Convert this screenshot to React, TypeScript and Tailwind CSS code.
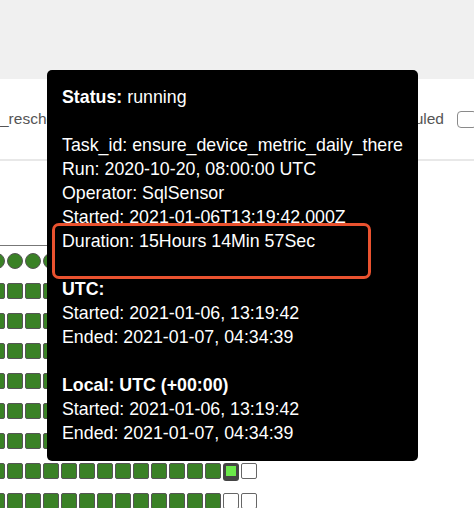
import React from 'react';

type CellState = 'success' | 'running' | 'none';

const COLS = 15;

function makeRow(green: number, extra: CellState[] = []): CellState[] {
  const row: CellState[] = Array.from({ length: green }, () => 'success' as CellState);
  return [...row, ...extra].concat(Array(Math.max(0, COLS - green - extra.length)).fill('none'));
}

const rows: CellState[][] = [
  makeRow(15),
  makeRow(15),
  makeRow(15),
  makeRow(15),
  makeRow(15),
  makeRow(15),
  makeRow(13, ['running', 'none']),
  makeRow(13, ['none', 'none']),
];

function Cell({ state }: { state: CellState }) {
  if (state === 'running') {
    return (
      <div className="w-[16px] h-[16px] rounded-[3px] bg-[#444] flex items-center justify-center shadow-[0_2px_0_#444]">
        <div className="w-[10px] h-[10px] bg-[#6be84a]" />
      </div>
    );
  }
  if (state === 'none') {
    return <div className="w-[16px] h-[16px] rounded-[2px] border border-[#666] bg-white" />;
  }
  return <div className="w-[16px] h-[16px] rounded-[2px] border border-[#555] bg-[#3a8126]" />;
}

const tooltipLines: { label?: string; text?: string }[] = [
  { label: 'Status:', text: ' running' },
  {},
  { text: 'Task_id: ensure_device_metric_daily_there' },
  { text: 'Run: 2020-10-20, 08:00:00 UTC' },
  { text: 'Operator: SqlSensor' },
  { text: 'Started: 2021-01-06T13:19:42.000Z' },
  { text: 'Duration: 15Hours 14Min 57Sec' },
  {},
  { label: 'UTC:' },
  { text: 'Started: 2021-01-06, 13:19:42' },
  { text: 'Ended: 2021-01-07, 04:34:39' },
  {},
  { label: 'Local: UTC (+00:00)' },
  { text: 'Started: 2021-01-06, 13:19:42' },
  { text: 'Ended: 2021-01-07, 04:34:39' },
];

export default function App() {
  return (
    <div className="relative w-[474px] h-[508px] overflow-hidden bg-white font-['Liberation_Sans',Arial,sans-serif]">
      {/* top band */}
      <div className="h-[79px] bg-[#f0f0f0]" />

      {/* legend row */}
      <div className="h-[82px] border-b-2 border-[#e8e8e8] flex items-center justify-between text-[15.5px] text-[#555]">
        <span className="whitespace-nowrap">_reschedule</span>
        <div className="flex items-center gap-[13px]">
          <span>scheduled</span>
          <div className="w-[20px] h-[17px] rounded-[4px] border border-[#8a8a8a] bg-white -mr-[3px]" />
        </div>
      </div>

      {/* tree grid */}
      <div className="mt-[84px] w-[260px] h-px bg-[#777]" />
      <div className="mt-[7px] ml-[-11px] flex gap-[2px]">
        {Array.from({ length: COLS }).map((_, i) => (
          <div key={i} className="w-[16px] h-[16px] rounded-full border border-[#555] bg-[#3a8126]" />
        ))}
      </div>
      <div className="mt-[14px] ml-[-11px] flex flex-col gap-[14px]">
        {rows.map((row, r) => (
          <div key={r} className="flex gap-[2px]">
            {row.map((c, i) => (
              <Cell key={i} state={c} />
            ))}
          </div>
        ))}
      </div>

      {/* tooltip */}
      <div className="absolute left-[47px] top-[70px] w-[371px] h-[391px] bg-black rounded-[5px] px-[15px] py-[15px] text-white text-[17.8px] leading-[24px] whitespace-nowrap">
        {tooltipLines.map((l, i) => (
          <div key={i} className="h-[24px]">
            {l.label && <b className="font-bold">{l.label}</b>}
            {l.text}
          </div>
        ))}
      </div>

      {/* highlight annotation */}
      <div className="absolute left-[52px] top-[223px] w-[319px] h-[56px] border-[3px] border-[#e9522f] rounded-[7px]" />
    </div>
  );
}
